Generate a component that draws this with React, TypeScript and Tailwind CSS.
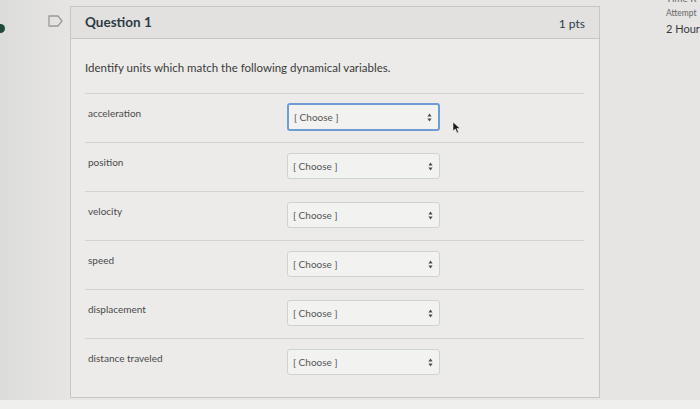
import React from 'react';

const rows = [
  { label: 'acceleration', focused: true },
  { label: 'position' },
  { label: 'velocity' },
  { label: 'speed' },
  { label: 'displacement' },
  { label: 'distance traveled' },
];

const SelectArrows = () => (
  <svg width="5" height="9" viewBox="0 0 5 9" className="shrink-0">
    <path d="M2.5 0.5 L4.6 3.6 L0.4 3.6 Z" fill="#4b4b4b" />
    <path d="M2.5 8.5 L4.6 5.4 L0.4 5.4 Z" fill="#4b4b4b" />
  </svg>
);

const ChooseSelect = ({ focused }: { focused?: boolean }) => (
  <div
    className={`flex items-center justify-between w-[153px] rounded-[3px] bg-[#f2f2f0] pl-[5px] pr-[6px] text-[10px] text-[#555] ${
      focused
        ? 'h-[28px] border-2 border-[#6f9dd3]'
        : 'h-[26px] border border-[#cfd2d3]'
    }`}
  >
    <span>[ Choose ]</span>
    <SelectArrows />
  </div>
);

export default function App() {
  return (
    <div
      className="relative w-[700px] h-[409px] overflow-hidden bg-[#e6e5e3] text-[#2d3b45]"
      style={{ fontFamily: 'Lato, "Open Sans", "Liberation Sans", sans-serif' }}
    >
      <div className="flex h-[400px]">
        {/* left gutter */}
        <div className="relative w-[70px] shrink-0 bg-gradient-to-r from-[#dcdcda] to-[#e6e5e3]">
          <div className="absolute left-[-4px] top-[24px] h-[9px] w-[9px] rounded-full bg-[#1f4a38]" />
          <svg
            className="absolute left-[48px] top-[15px]"
            width="15"
            height="12"
            viewBox="0 0 15 12"
          >
            <path d="M1 1 H10 L14 6 L10 11 H1 Z" fill="none" stroke="#9a9a9a" strokeWidth="1.3" />
          </svg>
        </div>

        {/* question card */}
        <div className="mt-[6px] mb-[2px] w-[530px] shrink-0 border border-[#c6c6c4] bg-[#ecebe9] flex flex-col">
          <div className="flex h-[32px] items-center justify-between border-b border-[#c6c6c4] bg-[#e2e1df] pl-[14px] pr-[14px]">
            <span className="text-[13.5px] font-bold">Question 1</span>
            <span className="text-[12px] mt-[3px]">1 pts</span>
          </div>
          <div className="pl-[14px] pr-[15px]">
            <p className="pt-[22px] pb-[18px] text-[11.5px] leading-[14px] text-[#3a3a3a]">
              Identify units which match the following dynamical variables.
            </p>
            {rows.map((r) => (
              <div key={r.label} className="flex h-[49px] border-t border-[#d3d3d1] pl-[3px]">
                <div className="w-[199px] pt-[12px] text-[10px] text-[#4a4a4a]">{r.label}</div>
                <div className={r.focused ? 'pt-[9px]' : 'pt-[10px]'}>
                  <ChooseSelect focused={r.focused} />
                </div>
              </div>
            ))}
          </div>
        </div>

        {/* right side timer */}
        <div className="flex flex-col pl-[66px] whitespace-nowrap">
          <span className="mt-[-9px] text-[10px] text-[#666]">Time R</span>
          <span className="text-[8.5px] text-[#666] mt-[1px]">Attempt</span>
          <span className="text-[11px] text-[#3a3a3a] mt-[1px]">2 Hour</span>
        </div>
      </div>
      <div className="h-[9px] bg-[#efefed]" />

      {/* mouse pointer */}
      <svg
        className="absolute left-[452px] top-[121px]"
        width="9"
        height="13"
        viewBox="0 0 9 13"
      >
        <path d="M1 1 L1 10 L3.3 8 L5 12 L6.5 11.3 L4.9 7.5 L8 7.5 Z" fill="#1a1a1a" stroke="#f2f2f2" strokeWidth="0.6" />
      </svg>
    </div>
  );
}
